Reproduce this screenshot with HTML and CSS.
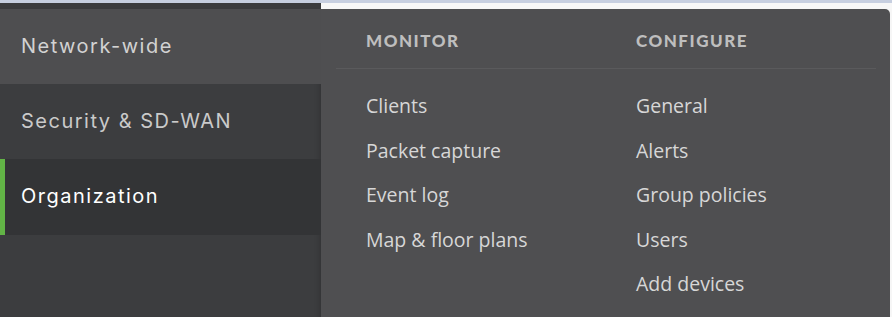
FILE: index.html
```html
<!DOCTYPE html>
<html>
<head>
  <title>Network menu</title>
  <link rel="stylesheet" href="styles.css">
</head>
<body>
  <div class="topline"></div>
  <div class="strip">
    <div class="strip-left"></div>
    <div class="strip-right"></div>
  </div>

  <div class="menu">
    <ul class="sidebar">
      <li class="hover">Network-wide</li>
      <li>Security &amp; SD-WAN</li>
      <li class="active">Organization</li>
    </ul>

    <div class="panel">
      <div class="panel-head">
        <h3>Monitor</h3>
        <h3>Configure</h3>
      </div>
      <div class="panel-cols">
        <ul class="links">
          <li>Clients</li>
          <li>Packet capture</li>
          <li>Event log</li>
          <li>Map &amp; floor plans</li>
        </ul>
        <ul class="links">
          <li>General</li>
          <li>Alerts</li>
          <li>Group policies</li>
          <li>Users</li>
          <li>Add devices</li>
        </ul>
      </div>
    </div>
  </div>
</body>
</html>
```

FILE: styles.css
```css
html, body {
  margin: 0;
  padding: 0;
  height: 100%;
  overflow: hidden;
}
body {
  background-color: #f6f6f6;
  font-family: "Open Sans", "Noto Sans", sans-serif;
}
ul {
  list-style: none;
  margin: 0;
  padding: 0;
}
.topline {
  height: 3px;
  background-color: #c7cfe0;
}
.strip {
  display: flex;
  height: 6px;
}
.strip-left {
  width: 321px;
  background-color: #3b3c3e;
}
.strip-right {
  flex: 1;
  background-color: #f7f7f7;
}
.menu {
  display: flex;
  height: 308px;
  margin-right: 2px;
  background-color: #4f4f51;
  border-top-right-radius: 5px;
}
.sidebar {
  width: 321px;
  background-color: #3c3d3f;
  box-shadow: inset -6px 0 6px -6px rgba(0, 0, 0, 0.25);
  font-family: Inter, sans-serif;
  font-size: 20px;
  letter-spacing: 1.5px;
}
.sidebar li {
  display: flex;
  align-items: center;
  height: 75px;
  padding-left: 21px;
  padding-bottom: 2px;
  box-sizing: border-box;
  color: #cacaca;
}
.sidebar li.hover {
  background-color: #4e4e50;
  color: #d2d2d2;
}
.sidebar li.active {
  height: 76px;
  padding-left: 16px;
  border-left: 5px solid #62b446;
  background-color: #333436;
  color: #fff;
}
.panel {
  flex: 1;
  padding: 0 14px 0 15px;
}
.panel-head {
  display: flex;
  height: 59px;
  border-bottom: 1px solid #5a5a5c;
}
.panel-head h3 {
  width: 270px;
  margin: 0;
  padding: 21px 0 0 30px;
  box-sizing: border-box;
  font-family: Lato, sans-serif;
  font-size: 17px;
  font-weight: 900;
  letter-spacing: 1.5px;
  text-transform: uppercase;
  color: #bebebe;
}
.panel-cols {
  display: flex;
  padding-top: 15px;
}
.links {
  width: 270px;
  padding-left: 30px;
  box-sizing: border-box;
}
.links li {
  height: 44.5px;
  line-height: 44.5px;
  font-size: 19.5px;
  color: #d7d7d7;
}
```
